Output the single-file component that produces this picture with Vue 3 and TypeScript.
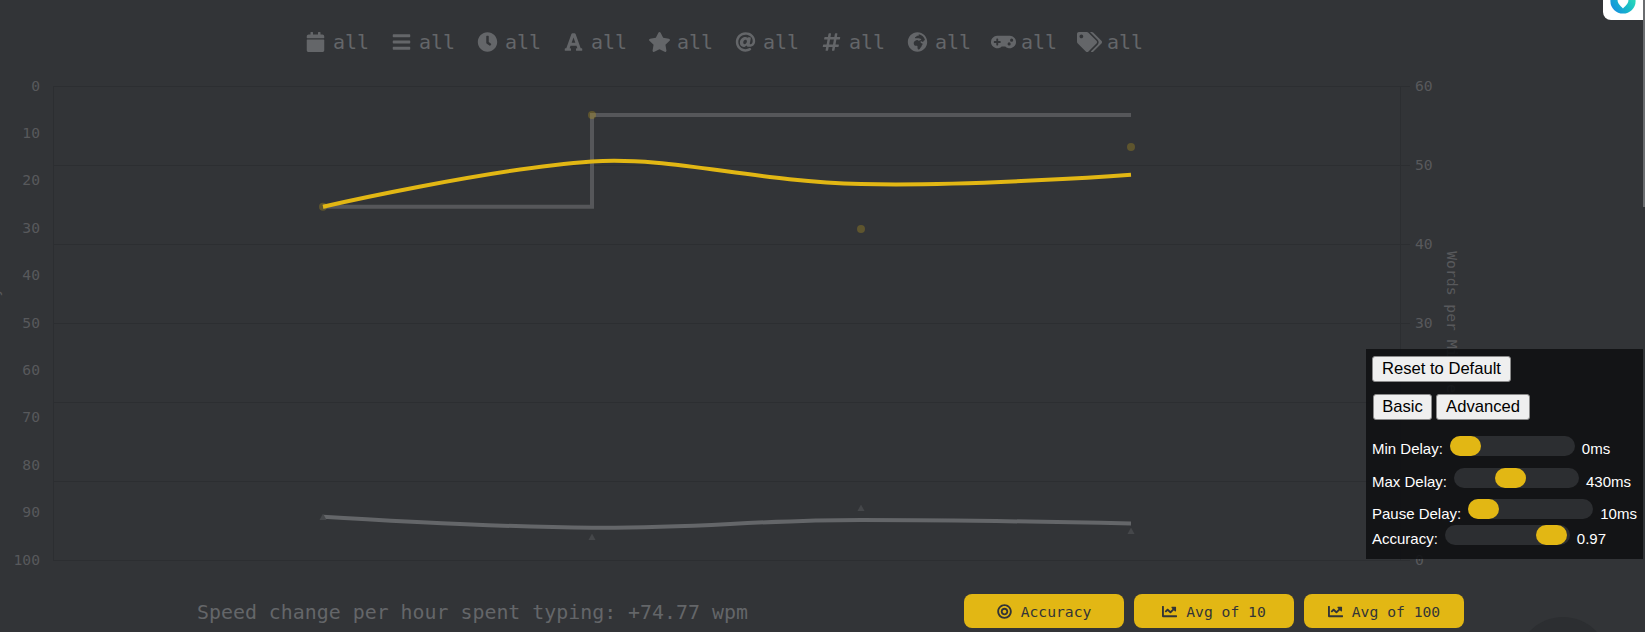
<script setup lang="ts">
interface Filter { vb: string; d: string }
const filters: Filter[] = [
  { vb: '0 0 448 512', d: 'M12 192h424c6.6 0 12 5.4 12 12v260c0 26.5-21.5 48-48 48H48c-26.5 0-48-21.5-48-48V204c0-6.6 5.4-12 12-12zm436-44v-36c0-26.5-21.5-48-48-48h-48V12c0-6.6-5.4-12-12-12h-40c-6.6 0-12 5.4-12 12v52H160V12c0-6.6-5.4-12-12-12h-40c-6.6 0-12 5.4-12 12v52H48C21.5 64 0 85.5 0 112v36c0 6.6 5.4 12 12 12h424c6.6 0 12-5.4 12-12z' },
  { vb: '0 0 448 512', d: 'M16 132h416c8.837 0 16-7.163 16-16V76c0-8.837-7.163-16-16-16H16C7.163 60 0 67.163 0 76v40c0 8.837 7.163 16 16 16zm0 160h416c8.837 0 16-7.163 16-16v-40c0-8.837-7.163-16-16-16H16c-8.837 0-16 7.163-16 16v40c0 8.837 7.163 16 16 16zm0 160h416c8.837 0 16-7.163 16-16v-40c0-8.837-7.163-16-16-16H16c-8.837 0-16 7.163-16 16v40c0 8.837 7.163 16 16 16z' },
  { vb: '0 0 512 512', d: 'M256,8C119,8,8,119,8,256S119,504,256,504,504,393,504,256,393,8,256,8Zm92.49,313h0l-20,25a16,16,0,0,1-22.49,2.5h0l-67-49.72a40,40,0,0,1-15-31.23V112a16,16,0,0,1,16-16h32a16,16,0,0,1,16,16V256l58,42.5A16,16,0,0,1,348.49,321Z' },
  { vb: '0 0 448 512', d: 'M432 416h-23.41L277.88 53.69A32 32 0 0 0 247.58 32h-47.16a32 32 0 0 0-30.3 21.69L39.41 416H16a16 16 0 0 0-16 16v32a16 16 0 0 0 16 16h128a16 16 0 0 0 16-16v-32a16 16 0 0 0-16-16h-19.58l23.3-64h152.56l23.3 64H304a16 16 0 0 0-16 16v32a16 16 0 0 0 16 16h128a16 16 0 0 0 16-16v-32a16 16 0 0 0-16-16zM176.85 272L224 142.51 271.15 272z' },
  { vb: '0 0 576 512', d: 'M259.3 17.8L194 150.2 47.9 171.5c-26.2 3.8-36.7 36.1-17.7 54.6l105.7 103-25 145.5c-4.5 26.3 23.2 46 46.4 33.7L288 439.6l130.7 68.7c23.2 12.2 50.9-7.4 46.4-33.7l-25-145.5 105.7-103c19-18.5 8.5-50.8-17.7-54.6L382 150.2 316.7 17.8c-11.7-23.6-45.6-23.9-57.4 0z' },
  { vb: '0 0 512 512', d: 'M256 8C118.941 8 8 118.919 8 256c0 137.059 110.919 248 248 248 48.154 0 95.342-14.14 135.408-40.223 12.005-7.815 14.625-24.288 5.552-35.372l-10.177-12.433c-7.671-9.371-21.179-11.667-31.373-5.129C325.92 429.757 291.314 440 256 440c-101.458 0-184-82.542-184-184S154.542 72 256 72c100.139 0 184 57.619 184 160 0 38.786-21.093 79.742-58.17 83.693-17.349-.454-16.91-12.857-13.476-30.024l23.433-121.11C394.653 149.75 383.308 136 368.225 136h-44.981a13.518 13.518 0 0 0-13.432 11.993l-.01.092c-14.697-17.901-40.448-21.775-59.971-21.775-74.58 0-137.831 62.234-137.831 151.46 0 65.303 36.785 105.87 96 105.87 26.984 0 57.369-15.637 74.991-38.333 9.522 34.104 40.613 34.103 70.71 34.103C462.609 379.41 504 307.798 504 232 504 95.653 394.023 8 256 8zm-21.68 304.43c-22.249 0-36.07-15.623-36.07-40.771 0-44.993 30.779-72.729 58.63-72.729 22.292 0 35.601 15.241 35.601 40.77 0 45.061-33.875 72.73-58.161 72.73z' },
  { vb: '0 0 448 512', d: 'M440.667 182.109l7.143-40c1.313-7.355-4.342-14.109-11.813-14.109h-74.81l14.623-81.891C377.123 38.754 371.468 32 363.997 32h-40.632a12 12 0 0 0-11.813 9.891L296.175 128H197.54l14.623-81.891C213.477 38.754 207.822 32 200.35 32h-40.632a12 12 0 0 0-11.813 9.891L132.528 128H53.432a12 12 0 0 0-11.813 9.891l-7.143 40C33.163 185.246 38.818 192 46.289 192h74.81L98.242 320H19.146a12 12 0 0 0-11.813 9.891l-7.143 40C-1.123 377.246 4.532 384 12.003 384h74.81L72.19 465.891C70.877 473.246 76.532 480 84.003 480h40.632a12 12 0 0 0 11.813-9.891L151.826 384h98.634l-14.623 81.891C234.523 473.246 240.178 480 247.65 480h40.632a12 12 0 0 0 11.813-9.891L315.472 384h79.096a12 12 0 0 0 11.813-9.891l7.143-40c1.313-7.355-4.342-14.109-11.813-14.109h-74.81l22.857-128h79.096a12 12 0 0 0 11.813-9.891zM261.889 320h-98.634l22.857-128h98.634l-22.857 128z' },
  { vb: '0 0 496 512', d: 'M248 8C111.03 8 0 119.03 0 256s111.03 248 248 248 248-111.03 248-248S384.97 8 248 8zm160 215.5v6.93c0 5.87-3.32 11.24-8.57 13.86l-15.39 7.7a15.485 15.485 0 0 1-15.53-.97l-18.21-12.14a15.52 15.52 0 0 0-13.5-1.81l-2.65.88c-9.7 3.23-13.66 14.79-7.99 23.3l13.24 19.86c2.87 4.31 7.71 6.9 12.89 6.9h8.21c8.56 0 15.5 6.94 15.5 15.5v11.34c0 3.35-1.09 6.62-3.1 9.3l-18.74 24.98c-1.42 1.9-2.39 4.1-2.83 6.43l-4.3 22.83c-.62 3.29-2.29 6.29-4.76 8.56a159.608 159.608 0 0 0-25 29.16l-13.03 19.55a27.756 27.756 0 0 1-23.09 12.36c-10.51 0-20.12-5.94-24.82-15.34a78.902 78.902 0 0 1-8.33-35.29V367.5c0-8.56-6.94-15.5-15.5-15.5h-25.88c-14.49 0-28.38-5.76-38.63-16a54.659 54.659 0 0 1-16-38.63v-14.06c0-17.19 8.1-33.38 21.85-43.7l27.58-20.69a54.663 54.663 0 0 1 32.78-10.93h.89c8.48 0 16.85 1.97 24.43 5.77l14.72 7.36c3.68 1.84 7.93 2.14 11.83.84l47.31-15.77c6.33-2.11 10.6-8.03 10.6-14.7 0-8.56-6.94-15.5-15.5-15.5h-10.09c-4.11 0-8.05-1.63-10.96-4.54l-6.92-6.92a15.493 15.493 0 0 0-10.96-4.54H199.5c-8.56 0-15.5-6.94-15.5-15.5v-4.4c0-7.11 4.84-13.31 11.74-15.04l14.45-3.61c3.74-.94 7-3.23 9.14-6.44l8.08-12.11c2.87-4.31 7.71-6.9 12.89-6.9h24.21c8.56 0 15.5-6.94 15.5-15.5v-21.7C359.23 71.63 422.86 131.02 441.93 208H423.5c-8.56 0-15.5 6.94-15.5 15.5z' },
  { vb: '0 0 640 512', d: 'M480.07 96H160a160 160 0 1 0 114.24 272h91.52A160 160 0 1 0 480.07 96zM248 268a12 12 0 0 1-12 12h-52v52a12 12 0 0 1-12 12h-24a12 12 0 0 1-12-12v-52H84a12 12 0 0 1-12-12v-24a12 12 0 0 1 12-12h52v-52a12 12 0 0 1 12-12h24a12 12 0 0 1 12 12v52h52a12 12 0 0 1 12 12zm216 76a40 40 0 1 1 40-40 40 40 0 0 1-40 40zm64-96a40 40 0 1 1 40-40 40 40 0 0 1-40 40z' },
  { vb: '0 0 640 512', d: 'M497.941 225.941L286.059 14.059A48 48 0 0 0 252.118 0H48C21.49 0 0 21.49 0 48v204.118a48 48 0 0 0 14.059 33.941l211.882 211.882c18.744 18.745 49.136 18.746 67.882 0l204.118-204.118c18.745-18.745 18.745-49.137 0-67.882zM112 160c-26.51 0-48-21.49-48-48s21.49-48 48-48 48 21.49 48 48-21.49 48-48 48zm513.941 133.823L421.823 497.941c-18.745 18.745-49.137 18.745-67.882 0l-.36-.36L527.64 323.522c16.999-16.999 26.36-39.6 26.36-63.64s-9.362-46.641-26.36-63.64L331.397 0h48.721a48 48 0 0 1 33.941 14.059l211.882 211.882c18.745 18.745 18.745 49.137 0 67.882z' },
]

const gridYs = [86.5, 165.5, 244.5, 323.5, 402.5, 481.5, 560.5]
const leftTicks = Array.from({ length: 11 }, (_, i) => ({ label: String(i * 10), y: 86 + i * 47.4 }))
const rightTicks = Array.from({ length: 7 }, (_, i) => ({ label: String(60 - i * 10), y: 86 + i * 79 }))
const dots = [
  { x: 323, y: 206.7 },
  { x: 592, y: 115 },
  { x: 861, y: 229 },
  { x: 1131, y: 147 },
]
const tris = [
  { x: 323, y: 517 },
  { x: 592, y: 537 },
  { x: 861, y: 508 },
  { x: 1131, y: 531 },
]
const triPoints = (x: number, y: number): string => `${x},${y - 3.5} ${x + 3.5},${y + 3} ${x - 3.5},${y + 3}`

const bullseye = 'M248 8C111.03 8 0 119.03 0 256s111.03 248 248 248 248-111.03 248-248S384.97 8 248 8zm0 432c-101.69 0-184-82.29-184-184 0-101.69 82.29-184 184-184 101.69 0 184 82.29 184 184 0 101.69-82.29 184-184 184zm0-312c-70.69 0-128 57.31-128 128s57.31 128 128 128 128-57.31 128-128-57.31-128-128-128zm0 192c-35.29 0-64-28.71-64-64s28.71-64 64-64 64 28.71 64 64-28.71 64-64 64z'
const chartLine = 'M496 384H64V80c0-8.84-7.16-16-16-16H16C7.16 64 0 71.16 0 80v336c0 17.67 14.33 32 32 32h464c8.84 0 16-7.16 16-16v-32c0-8.84-7.16-16-16-16zM464 96H345.94c-21.38 0-32.09 25.85-16.97 40.97l32.4 32.4L288 242.75l-73.37-73.37c-12.5-12.5-32.76-12.5-45.25 0l-68.69 68.69c-6.25 6.25-6.25 16.38 0 22.63l22.62 22.62c6.25 6.25 16.38 6.25 22.63 0L192 237.25l73.37 73.37c12.5 12.5 32.76 12.5 45.25 0l96-96 32.4 32.4c15.12 15.12 40.97 4.41 40.97-16.97V112c0-8.84-7.16-16-16-16z'
const actions = [
  { label: 'Accuracy', vb: '0 0 496 512', d: bullseye },
  { label: 'Avg of 10', vb: '0 0 512 512', d: chartLine },
  { label: 'Avg of 100', vb: '0 0 512 512', d: chartLine },
]

const sliders = [
  { cls: 'r1', label: 'Min Delay:', pos: 0, value: '0ms' },
  { cls: 'r2', label: 'Max Delay:', pos: 0.436, value: '430ms' },
  { cls: 'r3', label: 'Pause Delay:', pos: 0, value: '10ms' },
  { cls: 'r4', label: 'Accuracy:', pos: 0.968, value: '0.97' },
]
</script>

<template>
  <div class="page">
    <div class="filters">
      <div v-for="(f, i) in filters" :key="i" class="filter">
        <svg class="ficon" :viewBox="f.vb" width="25" height="20"><path :d="f.d" /></svg>
        <span>all</span>
      </div>
    </div>

    <svg class="chart" viewBox="0 70 1645 510" width="1645" height="510">
      <line v-for="y in gridYs" :key="y" class="grid" x1="53" :y1="y" x2="1410" :y2="y" />
      <line class="grid" x1="53.5" y1="86" x2="53.5" y2="561" />
      <line class="grid" x1="1400.5" y1="86" x2="1400.5" y2="561" />
      <text v-for="t in leftTicks" :key="t.label" class="tick" x="40" :y="t.y + 4.5" text-anchor="end">{{ t.label }}</text>
      <text v-for="t in rightTicks" :key="t.label" class="tick" x="1415" :y="t.y + 4.5">{{ t.label }}</text>
      <text class="tick" transform="translate(-1 323) rotate(-90)" text-anchor="middle">Accuracy</text>
      <text class="tick" transform="translate(1447 322) rotate(90)" text-anchor="middle">Words per Minute</text>

      <polyline class="step" points="323,206.7 592,206.7 592,115 1131,115" />
      <path class="wpm" d="M323,206.7 C323,206.7 490,168.5 592,161.5 C670,156.2 753,181.3 861,184 C969,186.7 1131,174.7 1131,174.7" />
      <circle v-for="d in dots" :key="d.x" class="dot" :cx="d.x" :cy="d.y" r="4" />

      <path class="acc" d="M323,516.7 C323,516.7 484,527 592,527.7 C700,528.4 753,520 861,520 C969,520 1131,523.5 1131,523.5" />
      <polygon v-for="t in tris" :key="t.x" class="tri" :points="triPoints(t.x, t.y)" />
    </svg>

    <div class="bottom">
      <div class="speed">Speed change per hour spent typing: +74.77 wpm</div>
      <div class="actions">
        <button v-for="a in actions" :key="a.label" class="action" type="button">
          <svg :viewBox="a.vb" width="15" height="15"><path :d="a.d" /></svg>
          <span>{{ a.label }}</span>
        </button>
      </div>
    </div>

    <div class="panel">
      <button class="native reset" type="button">Reset to Default</button>
      <div class="modes">
        <button class="native basic" type="button">Basic</button>
        <button class="native advanced" type="button">Advanced</button>
      </div>
      <div v-for="s in sliders" :key="s.label" class="row" :class="s.cls">
        <span class="txt">{{ s.label }}</span>
        <div class="track"><div class="thumb" :style="{ left: s.pos * 94 + 'px' }"></div></div>
        <span class="txt">{{ s.value }}</span>
      </div>
    </div>

    <div class="widget">
      <svg viewBox="0 0 26 26" width="26" height="26">
        <defs>
          <linearGradient id="shield" x1="0" y1="1" x2="1" y2="0.3">
            <stop offset="0" stop-color="#1583e6" />
            <stop offset="0.55" stop-color="#17b9c9" />
            <stop offset="1" stop-color="#2fe0b4" />
          </linearGradient>
        </defs>
        <circle cx="13" cy="13" r="12.6" fill="url(#shield)" />
        <path d="M13 20.5 C11.5 19 8 16 7.6 13 C7.4 10 10 8 13 9 C16 8 18.6 10 18.4 13 C18 16 14.5 19 13 20.5 Z" fill="#fff" />
      </svg>
    </div>
    <div class="scrollbar"></div>
    <div class="fab"></div>
  </div>
</template>

<style>
html, body { margin: 0; background: #323437; }
</style>

<style scoped>
.page {
  position: relative;
  width: 1645px;
  height: 632px;
  overflow: hidden;
  background: #323437;
  color: #646669;
  font-family: "DejaVu Sans Mono", "Liberation Mono", monospace;
}
.filters {
  display: flex;
  padding: 32px 0 0 283px;
  height: 20px;
  font-size: 20px;
  line-height: 20px;
}
.filter {
  width: 86px;
  display: flex;
  justify-content: flex-end;
  align-items: center;
  gap: 5px;
}
.ficon { fill: #646669; flex: none; }
.chart { display: block; margin-top: 18px; overflow: visible; }
.grid { stroke: #2c2e31; stroke-width: 1; }
.tick { fill: #58595c; font-size: 14.7px; }
.step { fill: none; stroke: #56575a; stroke-width: 4; stroke-linejoin: miter; }
.wpm { fill: none; stroke: #e2b714; stroke-width: 4; }
.acc { fill: none; stroke: #646669; stroke-width: 4; }
.dot { fill: #e2b714; fill-opacity: 0.25; }
.tri { fill: #45474a; }
.bottom {
  display: flex;
  align-items: center;
  justify-content: space-between;
  margin-top: 14px;
  padding: 0 181px 0 197px;
  height: 34px;
}
.speed { font-size: 19.9px; line-height: 34px; padding-top: 3px; }
.actions { display: flex; gap: 10px; }
.action {
  width: 160px;
  height: 34px;
  border: 0;
  border-radius: 8px;
  background: #e2b714;
  color: #323437;
  font: 14.7px "DejaVu Sans Mono", "Liberation Mono", monospace;
  display: flex;
  align-items: center;
  justify-content: center;
  gap: 9px;
  padding: 0;
}
.action svg { fill: #323437; flex: none; }
.panel {
  position: absolute;
  left: 1366px;
  top: 349px;
  width: 277px;
  height: 210px;
  box-sizing: border-box;
  padding: 7px 0 0 6px;
  background: rgba(15, 16, 18, 0.88);
  color: #fff;
  font-family: "Liberation Sans", Arial, sans-serif;
  font-size: 15px;
}
.native {
  display: block;
  height: 26px;
  box-sizing: border-box;
  padding: 0;
  border: 1px solid #8a8a8a;
  border-radius: 3px;
  background: #efefef;
  color: #000;
  font: 16.6px "Liberation Sans", Arial, sans-serif;
}
.reset { width: 139px; }
.basic { width: 59px; }
.advanced { width: 94px; }
.modes { display: flex; gap: 4px; margin: 12px 0 0 1px; }
.row { display: flex; gap: 7px; height: 20px; }
.txt { line-height: 20px; white-space: nowrap; }
.track {
  position: relative;
  width: 125px;
  height: 20px;
  border-radius: 10px;
  background: #2c2e31;
  flex: none;
}
.thumb {
  position: absolute;
  top: 0;
  width: 31px;
  height: 20px;
  border-radius: 10px;
  background: #e2b714;
}
.r1 { margin-top: 16px; }
.r1 .txt { margin-top: 3px; }
.r2 { margin-top: 12px; }
.r2 .txt { margin-top: 4px; }
.r3 { margin-top: 11px; }
.r3 .txt { margin-top: 5px; }
.r4 { margin-top: 6px; }
.r4 .txt { margin-top: 4px; }
.widget {
  position: absolute;
  left: 1603px;
  top: 0;
  width: 40px;
  height: 20px;
  background: #fff;
  border-radius: 0 0 0 8px;
  overflow: hidden;
  display: flex;
  justify-content: center;
  align-items: flex-end;
}
.widget svg { flex: none; margin-bottom: 6px; }
.scrollbar {
  position: absolute;
  right: 0;
  top: 0;
  width: 2px;
  height: 207px;
  background: #6a6c6f;
}
.fab {
  position: absolute;
  left: 1517px;
  top: 617px;
  width: 92px;
  height: 92px;
  border-radius: 50%;
  background: #2c2e31;
}
</style>
